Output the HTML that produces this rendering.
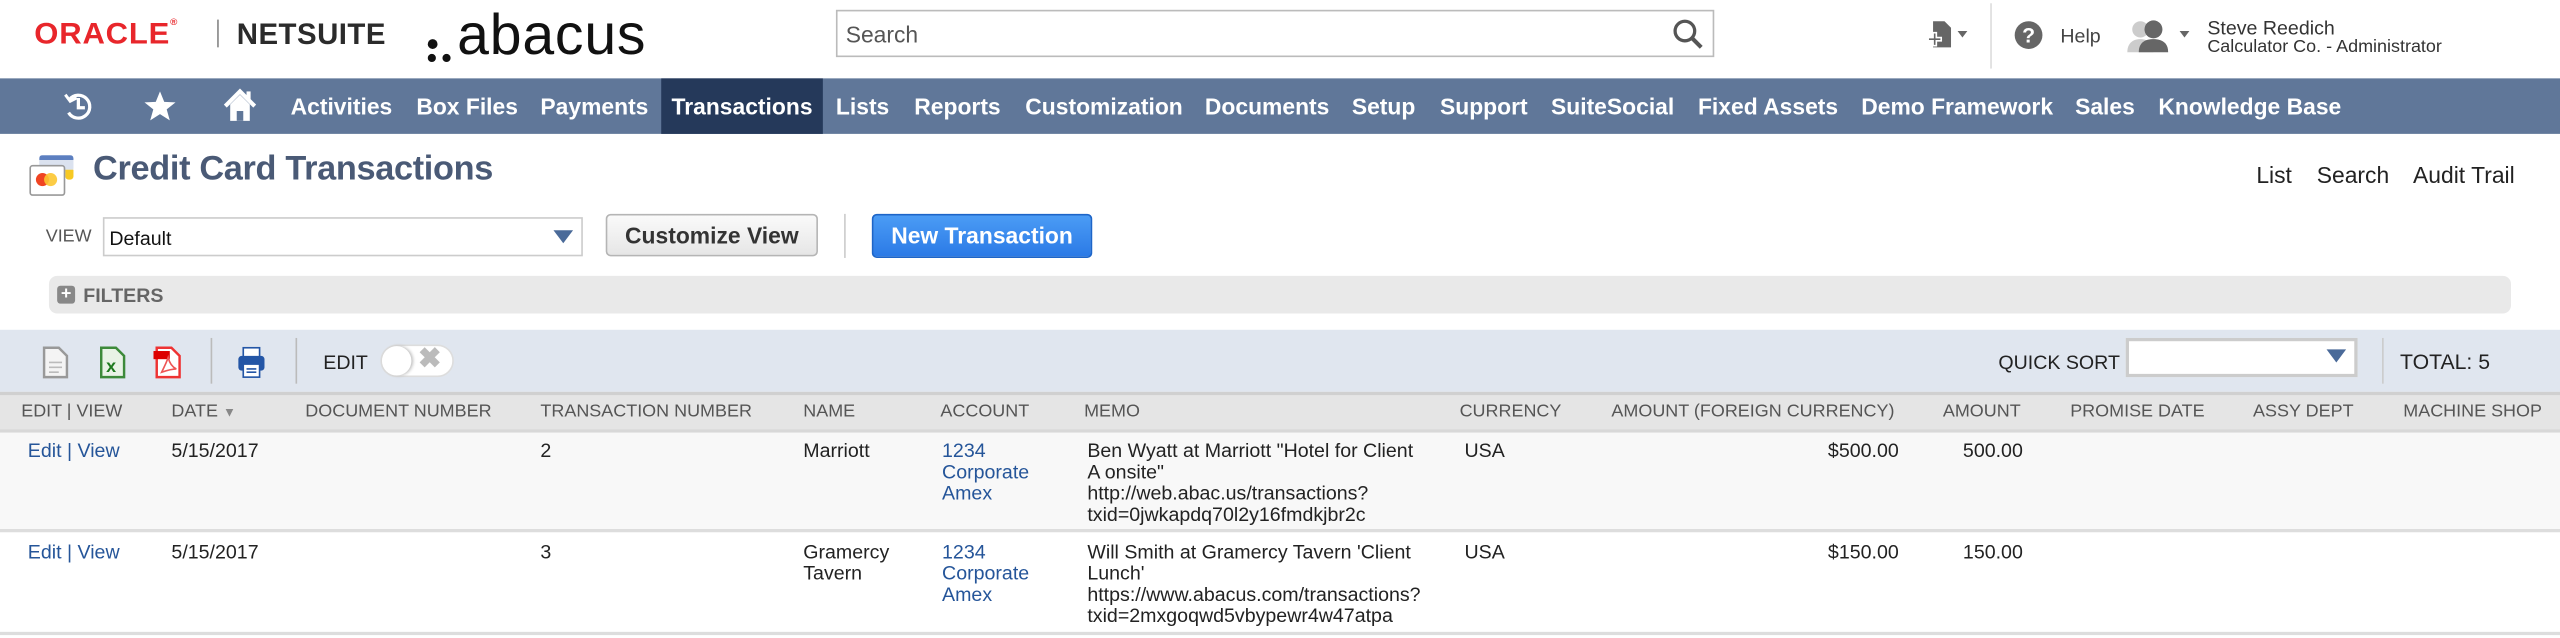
<!DOCTYPE html>
<html><head><meta charset="utf-8">
<style>
*{margin:0;padding:0;box-sizing:border-box}
html,body{width:2560px;height:638px;overflow:hidden;background:#fff}
#w{position:absolute;left:0;top:0;width:1568px;height:391px;transform:scale(1.63265);transform-origin:0 0;font-family:"Liberation Sans",Arial,sans-serif;color:#222}
.a{position:absolute;white-space:nowrap}
.nav{position:absolute;left:0;top:48px;width:1568px;height:34px;background:#607799}
.nav .i{position:absolute;top:0;height:34px;line-height:34px;color:#fff;font-weight:bold;font-size:14px}
.th{position:absolute;top:240px;height:24px;line-height:24px;font-size:11px;color:#555;white-space:nowrap}
.td{position:absolute;font-size:12px;line-height:13px;color:#222;white-space:nowrap}
.lk{color:#255599}
</style></head><body><div id="w">
<!-- header -->
<div class="a" style="left:21px;top:11px;font-size:19px;font-weight:bold;color:#e8262b;letter-spacing:0.5px;transform:scaleY(0.95)">ORACLE<span style="font-size:6px;vertical-align:top">®</span></div>
<div class="a" style="left:133px;top:12px;width:1px;height:17px;background:#888"></div>
<div class="a" style="left:145px;top:11px;font-size:18px;font-weight:bold;color:#2b2b2b;letter-spacing:0.3px">NETSUITE</div>
<div class="a" style="left:262px;top:24px;width:6px;height:6px;border-radius:3px;background:#111"></div>
<div class="a" style="left:262px;top:33px;width:5px;height:5px;border-radius:3px;background:#111"></div>
<div class="a" style="left:271px;top:33px;width:5px;height:5px;border-radius:3px;background:#111"></div>
<div class="a" style="left:280px;top:0px;font-size:35px;color:#111;line-height:44px;letter-spacing:0.5px">abacus</div>
<div class="a" style="left:512px;top:6px;width:538px;height:29px;border:1px solid #bbb;background:#fff"></div>
<div class="a" style="left:518px;top:13px;font-size:14px;color:#555">Search</div>
<svg class="a" style="left:1024px;top:11px" width="20" height="20" viewBox="0 0 20 20"><circle cx="8" cy="8" r="6" fill="none" stroke="#555" stroke-width="2"/><path d="M12.5 12.5L18 18" stroke="#555" stroke-width="2.5"/></svg>
<svg class="a" style="left:1178px;top:11px" width="32" height="22" viewBox="0 0 32 22"><path d="M6 2h7l4 4v12H6z" fill="#666"/><path d="M3 12h3v-3h2v3h3v2H8v3H6v-3H3z" fill="#666" stroke="#fff" stroke-width="1"/><path d="M21 8h6l-3 4z" fill="#666"/></svg>
<div class="a" style="left:1219px;top:2px;width:1px;height:40px;background:#ddd"></div>
<div class="a" style="left:1234px;top:13px;width:17px;height:17px;border-radius:9px;background:#666;color:#fff;font-weight:bold;font-size:13px;line-height:17px;text-align:center">?</div>
<div class="a" style="left:1262px;top:15px;font-size:12px;color:#444">Help</div>
<svg class="a" style="left:1302px;top:11px" width="44" height="22" viewBox="0 0 44 22"><circle cx="9" cy="7" r="5" fill="#ccc"/><path d="M1 21c0-6 4-8 8-8s8 2 8 8z" fill="#ccc"/><circle cx="17" cy="7" r="5.5" fill="#666"/><path d="M8 21c0-6 4-8 9-8s9 2 9 8z" fill="#666"/><path d="M33 8h6l-3 4z" fill="#666"/></svg>
<div class="a" style="left:1352px;top:10px;font-size:12px;color:#333">Steve Reedich</div>
<div class="a" style="left:1352px;top:23px;font-size:11px;color:#333">Calculator Co. - Administrator</div>
<!-- nav -->
<div class="nav">
<svg class="a" style="left:38px;top:7px" width="20" height="20" viewBox="0 0 20 20"><path d="M4.5 6A7 7 0 1 1 4 14" fill="none" stroke="#fff" stroke-width="2"/><path d="M2 3l3 4 4-2" fill="none" stroke="#fff" stroke-width="1.8"/><path d="M10 5v6h4" fill="none" stroke="#fff" stroke-width="2"/></svg>
<svg class="a" style="left:88px;top:7px" width="20" height="20" viewBox="0 0 20 20"><path d="M10 1l2.6 6.4 6.9.3-5.4 4.3 1.9 6.7L10 14.9 4 18.7l1.9-6.7L.5 7.7l6.9-.3z" fill="#fff"/></svg>
<svg class="a" style="left:136px;top:6px" width="22" height="22" viewBox="0 0 22 22"><path d="M2 11L11 2l9 9" fill="none" stroke="#fff" stroke-width="2.5"/><path d="M5 10v10h12V10L11 4z" fill="#fff"/><rect x="9" y="14" width="4" height="6" fill="#607799"/><rect x="15" y="2" width="2.5" height="5" fill="#fff"/></svg>
<div class="i" style="left:178px">Activities</div>
<div class="i" style="left:255px">Box Files</div>
<div class="i" style="left:331px">Payments</div>
<div class="i" style="left:405px;width:99px;background:#25395a;text-align:center">Transactions</div>
<div class="i" style="left:512px">Lists</div>
<div class="i" style="left:560px">Reports</div>
<div class="i" style="left:628px">Customization</div>
<div class="i" style="left:738px">Documents</div>
<div class="i" style="left:828px">Setup</div>
<div class="i" style="left:882px">Support</div>
<div class="i" style="left:950px">SuiteSocial</div>
<div class="i" style="left:1040px">Fixed Assets</div>
<div class="i" style="left:1140px">Demo Framework</div>
<div class="i" style="left:1271px">Sales</div>
<div class="i" style="left:1322px">Knowledge Base</div>
</div>
<!-- title icon -->
<div class="a" style="left:24px;top:95px;width:21px;height:10px;background:#dbe2ef;border-top:3px solid #5c7fc0;border-radius:2px"></div>
<div class="a" style="left:40px;top:104px;width:5px;height:6px;background:#f7c923;border-radius:0 0 2px 2px"></div>
<div class="a" style="left:18px;top:101px;width:22px;height:19px;border:1.5px solid #999;border-radius:2px;background:#fff"></div>
<div class="a" style="left:22px;top:106px;width:8px;height:8px;border-radius:4px;background:#f04422"></div>
<div class="a" style="left:27px;top:106px;width:8px;height:8px;border-radius:4px;background:#fcc631;opacity:0.9"></div>
<div class="a" style="left:57px;top:92px;font-size:21px;font-weight:bold;color:#4a5a76;letter-spacing:-0.2px">Credit Card Transactions</div>
<div class="a" style="left:1382px;top:99px;font-size:14px;color:#222">List</div>
<div class="a" style="left:1419px;top:99px;font-size:14px;color:#222">Search</div>
<div class="a" style="left:1478px;top:99px;font-size:14px;color:#222">Audit Trail</div>
<!-- view row -->
<div class="a" style="left:28px;top:139px;font-size:11px;color:#555">VIEW</div>
<div class="a" style="left:63px;top:133px;width:294px;height:24px;border:1px solid #ccc;background:#fff"></div>
<div class="a" style="left:67px;top:139px;font-size:12px;color:#111">Default</div>
<div class="a" style="left:339px;top:141px;width:0;height:0;border-left:6px solid transparent;border-right:6px solid transparent;border-top:8px solid #4a6a99"></div>
<div class="a" style="left:371px;top:131px;width:130px;height:26px;border:1px solid #b5b5b5;border-radius:3px;background:linear-gradient(#fafafa,#e6e6e6);font-size:14px;font-weight:bold;color:#333;text-align:center;line-height:24px">Customize View</div>
<div class="a" style="left:517px;top:131px;width:1px;height:27px;background:#ccc"></div>
<div class="a" style="left:534px;top:131px;width:135px;height:27px;border:1px solid #1d65c8;border-radius:3px;background:linear-gradient(#4b9cf5,#2b7ae6);font-size:14px;font-weight:bold;color:#fff;text-align:center;line-height:25px">New Transaction</div>
<!-- filters -->
<div class="a" style="left:30px;top:169px;width:1508px;height:23px;background:#e9e9e9;border-radius:5px"></div>
<div class="a" style="left:35px;top:175px;width:11px;height:11px;background:#888;border-radius:2px;color:#fff;font-size:11px;font-weight:bold;line-height:11px;text-align:center">+</div>
<div class="a" style="left:51px;top:174px;font-size:12px;font-weight:bold;color:#666">FILTERS</div>
<!-- toolbar -->
<div class="a" style="left:0;top:202px;width:1568px;height:38px;background:#e0e6ef"></div>
<svg class="a" style="left:26px;top:212px" width="16" height="20" viewBox="0 0 16 20"><path d="M1 1h9l5 5v13H1z" fill="#f4f4f4" stroke="#999" stroke-width="1.5"/><path d="M4 10h8M4 13h8M4 16h6" stroke="#bbb"/></svg>
<svg class="a" style="left:61px;top:212px" width="16" height="20" viewBox="0 0 16 20"><path d="M1 1h9l5 5v13H1z" fill="#e9f3e6" stroke="#3d8a3a" stroke-width="1.5"/><text x="4" y="16" font-size="11" font-weight="bold" fill="#1e7a1e" font-family="Liberation Sans">x</text></svg>
<svg class="a" style="left:94px;top:212px" width="17" height="20" viewBox="0 0 17 20"><path d="M2 1h9l5 5v13H2z" fill="#fff" stroke="#e33" stroke-width="1.5"/><rect x="0" y="3" width="10" height="5" fill="#d00"/><path d="M5 16c2-4 3-6 4-9 1 4 3 6 5 7-3 0-6 1-9 2z" fill="none" stroke="#e55"/></svg>
<div class="a" style="left:129px;top:207px;width:1px;height:28px;background:#bbb"></div>
<svg class="a" style="left:145px;top:212px" width="18" height="20" viewBox="0 0 18 20"><rect x="4" y="1" width="10" height="6" fill="#fff" stroke="#2456a6"/><rect x="1" y="6" width="16" height="9" rx="2" fill="#2456a6"/><rect x="4" y="11" width="10" height="8" fill="#fff" stroke="#2456a6"/><path d="M6 14h6M6 16h6" stroke="#2456a6"/></svg>
<div class="a" style="left:181px;top:207px;width:1px;height:28px;background:#bbb"></div>
<div class="a" style="left:198px;top:215px;font-size:12px;color:#222">EDIT</div>
<div class="a" style="left:233px;top:211px;width:45px;height:20px;border-radius:10px;background:#fff;border:1px solid #ddd"></div>
<div class="a" style="left:234px;top:212px;width:18px;height:18px;border-radius:9px;background:#fff;box-shadow:1px 0 2px #bbb"></div>
<div class="a" style="left:256px;top:210px;font-size:17px;font-weight:bold;color:#bbb">✖</div>
<div class="a" style="left:1224px;top:215px;font-size:12px;color:#222">QUICK SORT</div>
<div class="a" style="left:1302px;top:207px;width:142px;height:24px;border:2px solid #ccc;background:#fff"></div>
<div class="a" style="left:1425px;top:214px;width:0;height:0;border-left:6px solid transparent;border-right:6px solid transparent;border-top:8px solid #4a6a99"></div>
<div class="a" style="left:1459px;top:207px;width:1px;height:28px;background:#ccc"></div>
<div class="a" style="left:1470px;top:214px;font-size:13px;color:#222">TOTAL: 5</div>
<!-- table header -->
<div class="a" style="left:0;top:240px;width:1568px;height:25px;background:#e5e5e5;border-top:2px solid #d0d0d0;border-bottom:2px solid #d8d8d8"></div>
<div class="th" style="left:13px">EDIT | VIEW</div>
<div class="th" style="left:105px">DATE <span style="font-size:8px;color:#888">▼</span></div>
<div class="th" style="left:187px">DOCUMENT NUMBER</div>
<div class="th" style="left:331px">TRANSACTION NUMBER</div>
<div class="th" style="left:492px">NAME</div>
<div class="th" style="left:576px">ACCOUNT</div>
<div class="th" style="left:664px">MEMO</div>
<div class="th" style="left:894px">CURRENCY</div>
<div class="th" style="left:987px">AMOUNT (FOREIGN CURRENCY)</div>
<div class="th" style="left:1190px">AMOUNT</div>
<div class="th" style="left:1268px">PROMISE DATE</div>
<div class="th" style="left:1380px">ASSY DEPT</div>
<div class="th" style="left:1472px">MACHINE SHOP</div>
<!-- rows -->
<div class="a" style="left:0;top:265px;width:1568px;height:61px;background:#f8f8f8;border-bottom:2px solid #ddd"></div>
<div class="a" style="left:0;top:327px;width:1568px;height:62px;background:#fff;border-bottom:2px solid #ddd"></div>
<div class="td lk" style="left:17px;top:270px">Edit | View</div>
<div class="td" style="left:105px;top:270px">5/15/2017</div>
<div class="td" style="left:331px;top:270px">2</div>
<div class="td" style="left:492px;top:270px">Marriott</div>
<div class="td lk" style="left:577px;top:270px">1234<br>Corporate<br>Amex</div>
<div class="td" style="left:666px;top:270px">Ben Wyatt at Marriott "Hotel for Client<br>A onsite"<br>http://web.abac.us/transactions?<br>txid=0jwkapdq70l2y16fmdkjbr2c</div>
<div class="td" style="left:897px;top:270px">USA</div>
<div class="td" style="left:1100px;top:270px;width:63px;text-align:right">$500.00</div>
<div class="td" style="left:1170px;top:270px;width:69px;text-align:right">500.00</div>
<div class="td lk" style="left:17px;top:332px">Edit | View</div>
<div class="td" style="left:105px;top:332px">5/15/2017</div>
<div class="td" style="left:331px;top:332px">3</div>
<div class="td" style="left:492px;top:332px">Gramercy<br>Tavern</div>
<div class="td lk" style="left:577px;top:332px">1234<br>Corporate<br>Amex</div>
<div class="td" style="left:666px;top:332px">Will Smith at Gramercy Tavern 'Client<br>Lunch'<br>https://www.abacus.com/transactions?<br>txid=2mxgoqwd5vbypewr4w47atpa</div>
<div class="td" style="left:897px;top:332px">USA</div>
<div class="td" style="left:1100px;top:332px;width:63px;text-align:right">$150.00</div>
<div class="td" style="left:1170px;top:332px;width:69px;text-align:right">150.00</div>
</div></body></html>
